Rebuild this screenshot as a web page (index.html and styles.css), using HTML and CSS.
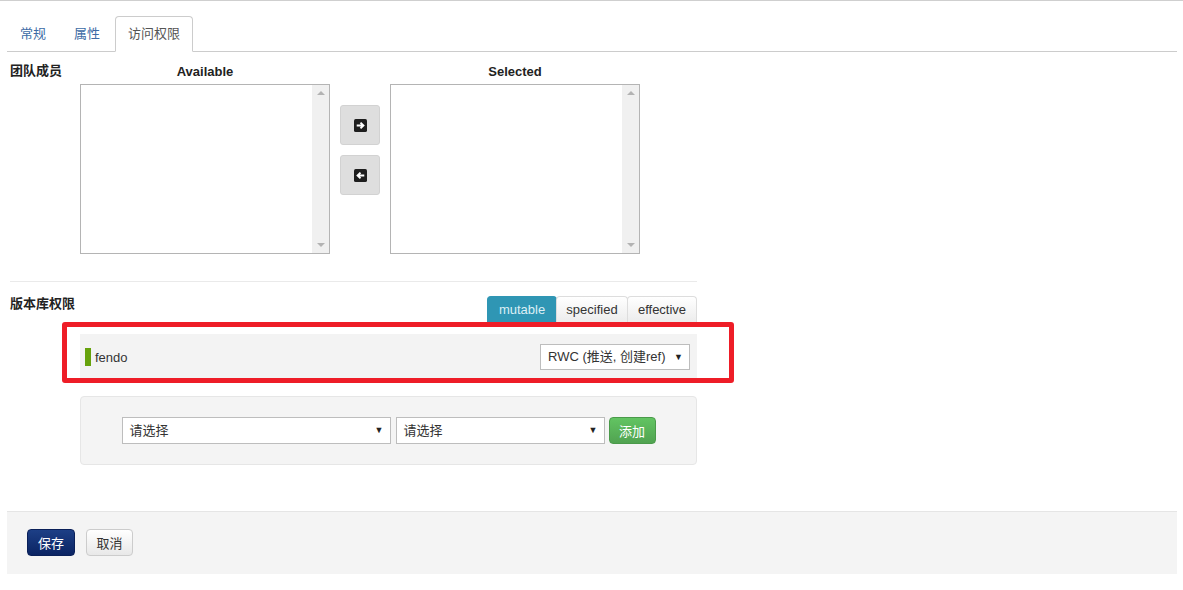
FILE: index.html
```html
<!DOCTYPE html>
<html lang="zh-CN">
<head>
    <meta charset="UTF-8">
    <title>访问权限</title>
    <link rel="stylesheet" href="styles.css">
</head>
<body>
    <div class="page">
        <ul class="nav-tabs">
            <li><a href="#">常规</a></li>
            <li><a href="#">属性</a></li>
            <li class="active"><a href="#">访问权限</a></li>
        </ul>

        <div class="tab-content">
            <!-- 团队成员 -->
            <div class="form-row">
                <div class="row-label">团队成员</div>
                <div class="duallist">
                    <div class="list-col">
                        <div class="list-title">Available</div>
                        <div class="listbox">
                            <div class="scrollbar"><span class="up"></span><span class="down"></span></div>
                        </div>
                    </div>
                    <div class="move-buttons">
                        <button class="move-btn" title="add">
                            <svg width="13" height="13" viewBox="0 0 12 12"><rect width="12" height="12" rx="1.5" fill="#1e1e1e"/><path d="M2.5 6H8.5M6 3.3L8.7 6L6 8.7" stroke="#fff" stroke-width="1.8" fill="none"/></svg>
                        </button>
                        <button class="move-btn" title="remove">
                            <svg width="13" height="13" viewBox="0 0 12 12"><rect width="12" height="12" rx="1.5" fill="#1e1e1e"/><path d="M9.5 6H3.5M6 3.3L3.3 6L6 8.7" stroke="#fff" stroke-width="1.8" fill="none"/></svg>
                        </button>
                    </div>
                    <div class="list-col">
                        <div class="list-title">Selected</div>
                        <div class="listbox">
                            <div class="scrollbar"><span class="up"></span><span class="down"></span></div>
                        </div>
                    </div>
                </div>
            </div>

            <hr class="divider">

            <!-- 版本库权限 -->
            <div class="repo-section">
                <div class="repo-header">
                    <div class="row-label">版本库权限</div>
                    <div class="btn-tabs">
                        <a href="#" class="active tab-mutable">mutable</a>
                        <a href="#" class="tab-specified">specified</a>
                        <a href="#" class="tab-effective">effective</a>
                    </div>
                </div>

                <div class="perm-row">
                    <div class="perm-name"><span class="perm-bar"></span>fendo</div>
                    <div class="select perm-select">RWC (推送, 创建ref)</div>
                    <div class="highlight"></div>
                </div>

                <div class="add-panel">
                    <div class="select select-wide">请选择</div>
                    <div class="select select-mid">请选择</div>
                    <button class="btn btn-success">添加</button>
                </div>
            </div>
        </div>

        <div class="form-actions">
            <button class="btn btn-primary">保存</button>
            <button class="btn btn-default">取消</button>
        </div>
    </div>
</body>
</html>
```

FILE: styles.css
```css
body {
    margin: 0;
    font-family: "Liberation Sans", "Noto Sans CJK SC", Arial, sans-serif;
    font-size: 13px;
    color: #333;
    background-color: #fff;
}

.page {
    border-top: 1px solid #cfcfcf;
    padding: 0 6px 0 7px;
}

/* tabs */
.nav-tabs {
    display: flex;
    list-style: none;
    margin: 15px 0 0;
    padding: 0;
    border-bottom: 1px solid #ccc;
}

.nav-tabs li {
    margin-right: 2px;
    margin-bottom: -1px;
}

.nav-tabs a {
    display: block;
    padding: 8px 12px;
    line-height: 18px;
    border: 1px solid transparent;
    border-radius: 4px 4px 0 0;
    color: #3c6ba5;
    text-decoration: none;
}

.nav-tabs .active a {
    color: #555;
    background-color: #fff;
    border-color: #ccc;
    border-bottom-color: #fff;
}

.tab-content {
    padding: 10px 0 0 3px;
}

.form-row {
    display: flex;
}

.row-label {
    width: 70px;
    font-weight: bold;
    color: #222;
    line-height: 18px;
}

/* dual list */
.duallist {
    display: flex;
    gap: 10px;
}

.list-col {
    width: 250px;
}

.list-title {
    text-align: center;
    font-weight: bold;
    color: #222;
    line-height: 20px;
    margin-bottom: 2px;
}

.listbox {
    height: 168px;
    border: 1px solid #b4b4b4;
    background-color: #fff;
    display: flex;
    justify-content: flex-end;
}

.scrollbar {
    width: 17px;
    background-color: #f0f0f0;
    display: flex;
    flex-direction: column;
    justify-content: space-between;
    align-items: center;
    padding: 6px 0;
}

.scrollbar .up,
.scrollbar .down {
    width: 0;
    height: 0;
    border-left: 4px solid transparent;
    border-right: 4px solid transparent;
}

.scrollbar .up {
    border-bottom: 4px solid #b3b3b3;
}

.scrollbar .down {
    border-top: 4px solid #b3b3b3;
}

.move-buttons {
    display: flex;
    flex-direction: column;
    gap: 10px;
    padding-top: 43px;
}

.move-btn {
    width: 40px;
    height: 40px;
    padding: 0;
    border: 1px solid #d2d2d2;
    border-radius: 3px;
    background-color: #dedede;
    display: flex;
    align-items: center;
    justify-content: center;
    cursor: pointer;
}

.divider {
    width: 687px;
    margin: 27px 0 0;
    border: 0;
    border-top: 1px solid #eaeaea;
}

/* repository permissions */
.repo-section {
    width: 687px;
    margin-top: 14px;
}

.repo-header {
    display: flex;
    justify-content: space-between;
    align-items: flex-start;
}

.repo-header .row-label {
    width: auto;
    line-height: 14px;
    padding-top: 1px;
}

.btn-tabs {
    display: flex;
}

.btn-tabs a {
    display: block;
    box-sizing: border-box;
    height: 26px;
    line-height: 25px;
    text-align: center;
    color: #333;
    text-decoration: none;
    border: 1px solid #ddd;
    border-bottom: 0;
    margin-left: -1px;
    border-radius: 4px 4px 0 0;
    background: linear-gradient(#fff, #ececec);
    font-size: 13px;
}

.btn-tabs .tab-mutable {
    width: 70px;
}

.btn-tabs .tab-specified {
    width: 72px;
}

.btn-tabs .tab-effective {
    width: 70px;
}

.btn-tabs a.active {
    background: #2f96b4;
    border-color: #2f96b4;
    color: #dceff5;
}

.perm-row {
    position: relative;
    margin: 12px 0 0 70px;
    height: 46px;
    background-color: #f3f3f3;
    display: flex;
    align-items: center;
    justify-content: space-between;
    padding: 0 7px 0 5px;
}

.perm-name {
    display: flex;
    align-items: center;
    color: #333;
}

.perm-bar {
    display: inline-block;
    width: 6px;
    height: 18px;
    background-color: #66a20c;
    margin-right: 4px;
}

.highlight {
    position: absolute;
    left: -18px;
    top: -12px;
    right: -37px;
    bottom: -3px;
    border: 5px solid #ee1d27;
    border-radius: 3px;
}

/* fake selects */
.select {
    position: relative;
    box-sizing: border-box;
    height: 27px;
    line-height: 25px;
    border: 1px solid #bdbdbd;
    background-color: #fff;
    padding: 0 20px 0 7px;
    color: #333;
}

.select::after {
    content: "▼";
    position: absolute;
    right: 6px;
    top: 0;
    font-size: 9px;
    color: #222;
}

.perm-select {
    width: 150px;
    height: 26px;
    line-height: 24px;
}

.add-panel {
    margin: 16px 0 0 70px;
    height: 69px;
    box-sizing: border-box;
    border: 1px solid #e6e6e6;
    border-radius: 4px;
    background-color: #f4f4f4;
    display: flex;
    align-items: center;
    justify-content: center;
}

.select-wide {
    width: 269px;
    margin-right: 5px;
}

.select-mid {
    width: 209px;
    margin-right: 4px;
}

/* buttons */
.btn {
    box-sizing: border-box;
    height: 27px;
    padding: 0;
    font-family: inherit;
    font-size: 13px;
    white-space: nowrap;
    border-radius: 4px;
    cursor: pointer;
}

.btn-success {
    width: 47px;
    color: #fff;
    border: 1px solid #4a9a4a;
    background: linear-gradient(#62c462, #51a351);
}

.btn-primary {
    width: 48px;
    color: #fff;
    border: 1px solid #0a2059;
    background: linear-gradient(#1d3f86, #0b2463);
}

.btn-default {
    width: 47px;
    color: #333;
    border: 1px solid #ccc;
    background: linear-gradient(#fff, #e8e8e8);
    margin-left: 11px;
}

.form-actions {
    margin-top: 46px;
    height: 63px;
    box-sizing: border-box;
    border-top: 1px solid #e5e5e5;
    background-color: #f4f4f4;
    padding: 0 20px 1px;
    display: flex;
    align-items: center;
}
```
